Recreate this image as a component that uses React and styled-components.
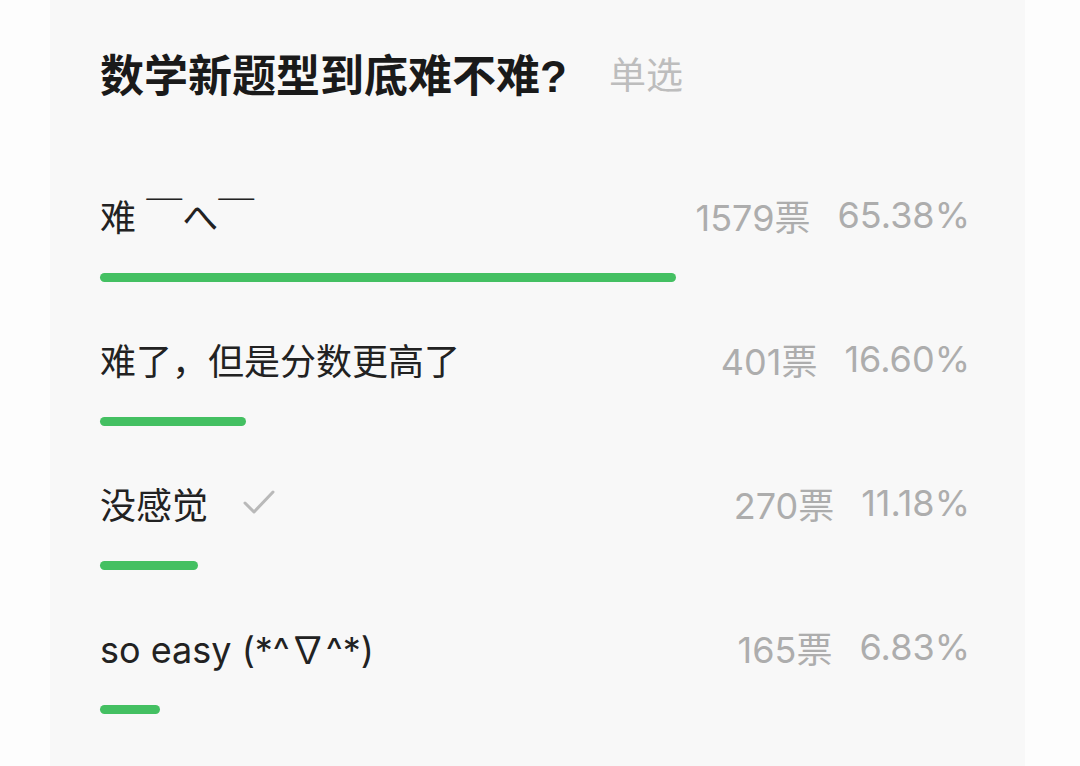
import React from "react";
import styled, { createGlobalStyle } from "styled-components";

const Global = createGlobalStyle`
  html, body {
    margin: 0;
    padding: 0;
    background: #fdfdfd;
  }
  body {
    font-family: Inter, "Noto Sans CJK SC", sans-serif;
  }
`;

const Page = styled.div`
  width: 1080px;
  height: 766px;
  overflow: hidden;
  background: #fdfdfd;
`;

const Card = styled.section`
  margin-left: 50px;
  width: 975px;
  height: 766px;
  box-sizing: border-box;
  background: #f8f8f8;
  padding: 50px 55px 0 50px;
`;

const Header = styled.div`
  display: flex;
  align-items: center;
  gap: 42px;
  height: 54px;
`;

const Title = styled.h2`
  margin: 0;
  font-size: 44px;
  line-height: 54px;
  font-weight: 700;
  color: #1a1a1a;
  font-family: "Liberation Sans", "Noto Sans CJK SC", sans-serif;
`;

const Mode = styled.span`
  font-size: 37px;
  color: #bdbdbd;
  font-family: "Noto Sans CJK SC", sans-serif;
  position: relative;
  top: -4px;
`;

const List = styled.div`
  display: flex;
  flex-direction: column;
  gap: 55px;
  margin-top: 89px;
`;

const Option = styled.div`
  display: flex;
  flex-direction: column;
  gap: 36px;
`;

const Row = styled.div`
  display: flex;
  align-items: center;
  justify-content: space-between;
  height: 44px;
`;

const Label = styled.div`
  display: flex;
  align-items: center;
  gap: 34px;
  font-size: 36px;
  color: #222;
  white-space: nowrap;
`;

const Stats = styled.div`
  display: flex;
  align-items: center;
  gap: 27px;
  font-size: 36px;
  color: #adadad;
  white-space: nowrap;
`;

const Track = styled.div`
  width: 881px;
  height: 9px;
`;

const Fill = styled.div`
  height: 9px;
  border-radius: 5px;
  background: #44c062;
`;

const Check = () => (
  <svg width="34" height="30" viewBox="0 0 34 30" fill="none">
    <path
      d="M3 15 L12 24 L31 4"
      stroke="#b9b9b9"
      strokeWidth="3"
      strokeLinecap="round"
      strokeLinejoin="round"
    />
  </svg>
);

const options = [
  { label: "难 ￣へ￣", votes: 1579, pct: 65.38 },
  { label: "难了，但是分数更高了", votes: 401, pct: 16.6 },
  { label: "没感觉", votes: 270, pct: 11.18, checked: true },
  { label: "so easy (*^∇^*)", votes: 165, pct: 6.83 },
];

export default function App() {
  return (
    <Page>
      <Global />
      <Card>
        <Header>
          <Title>数学新题型到底难不难?</Title>
          <Mode>单选</Mode>
        </Header>
        <List>
          {options.map((o) => (
            <Option key={o.label}>
              <Row>
                <Label>
                  <span>{o.label}</span>
                  {o.checked && <Check />}
                </Label>
                <Stats>
                  <span>{o.votes}票</span>
                  <span>{o.pct.toFixed(2)}%</span>
                </Stats>
              </Row>
              <Track>
                <Fill style={{ width: `${o.pct}%` }} />
              </Track>
            </Option>
          ))}
        </List>
      </Card>
    </Page>
  );
}
